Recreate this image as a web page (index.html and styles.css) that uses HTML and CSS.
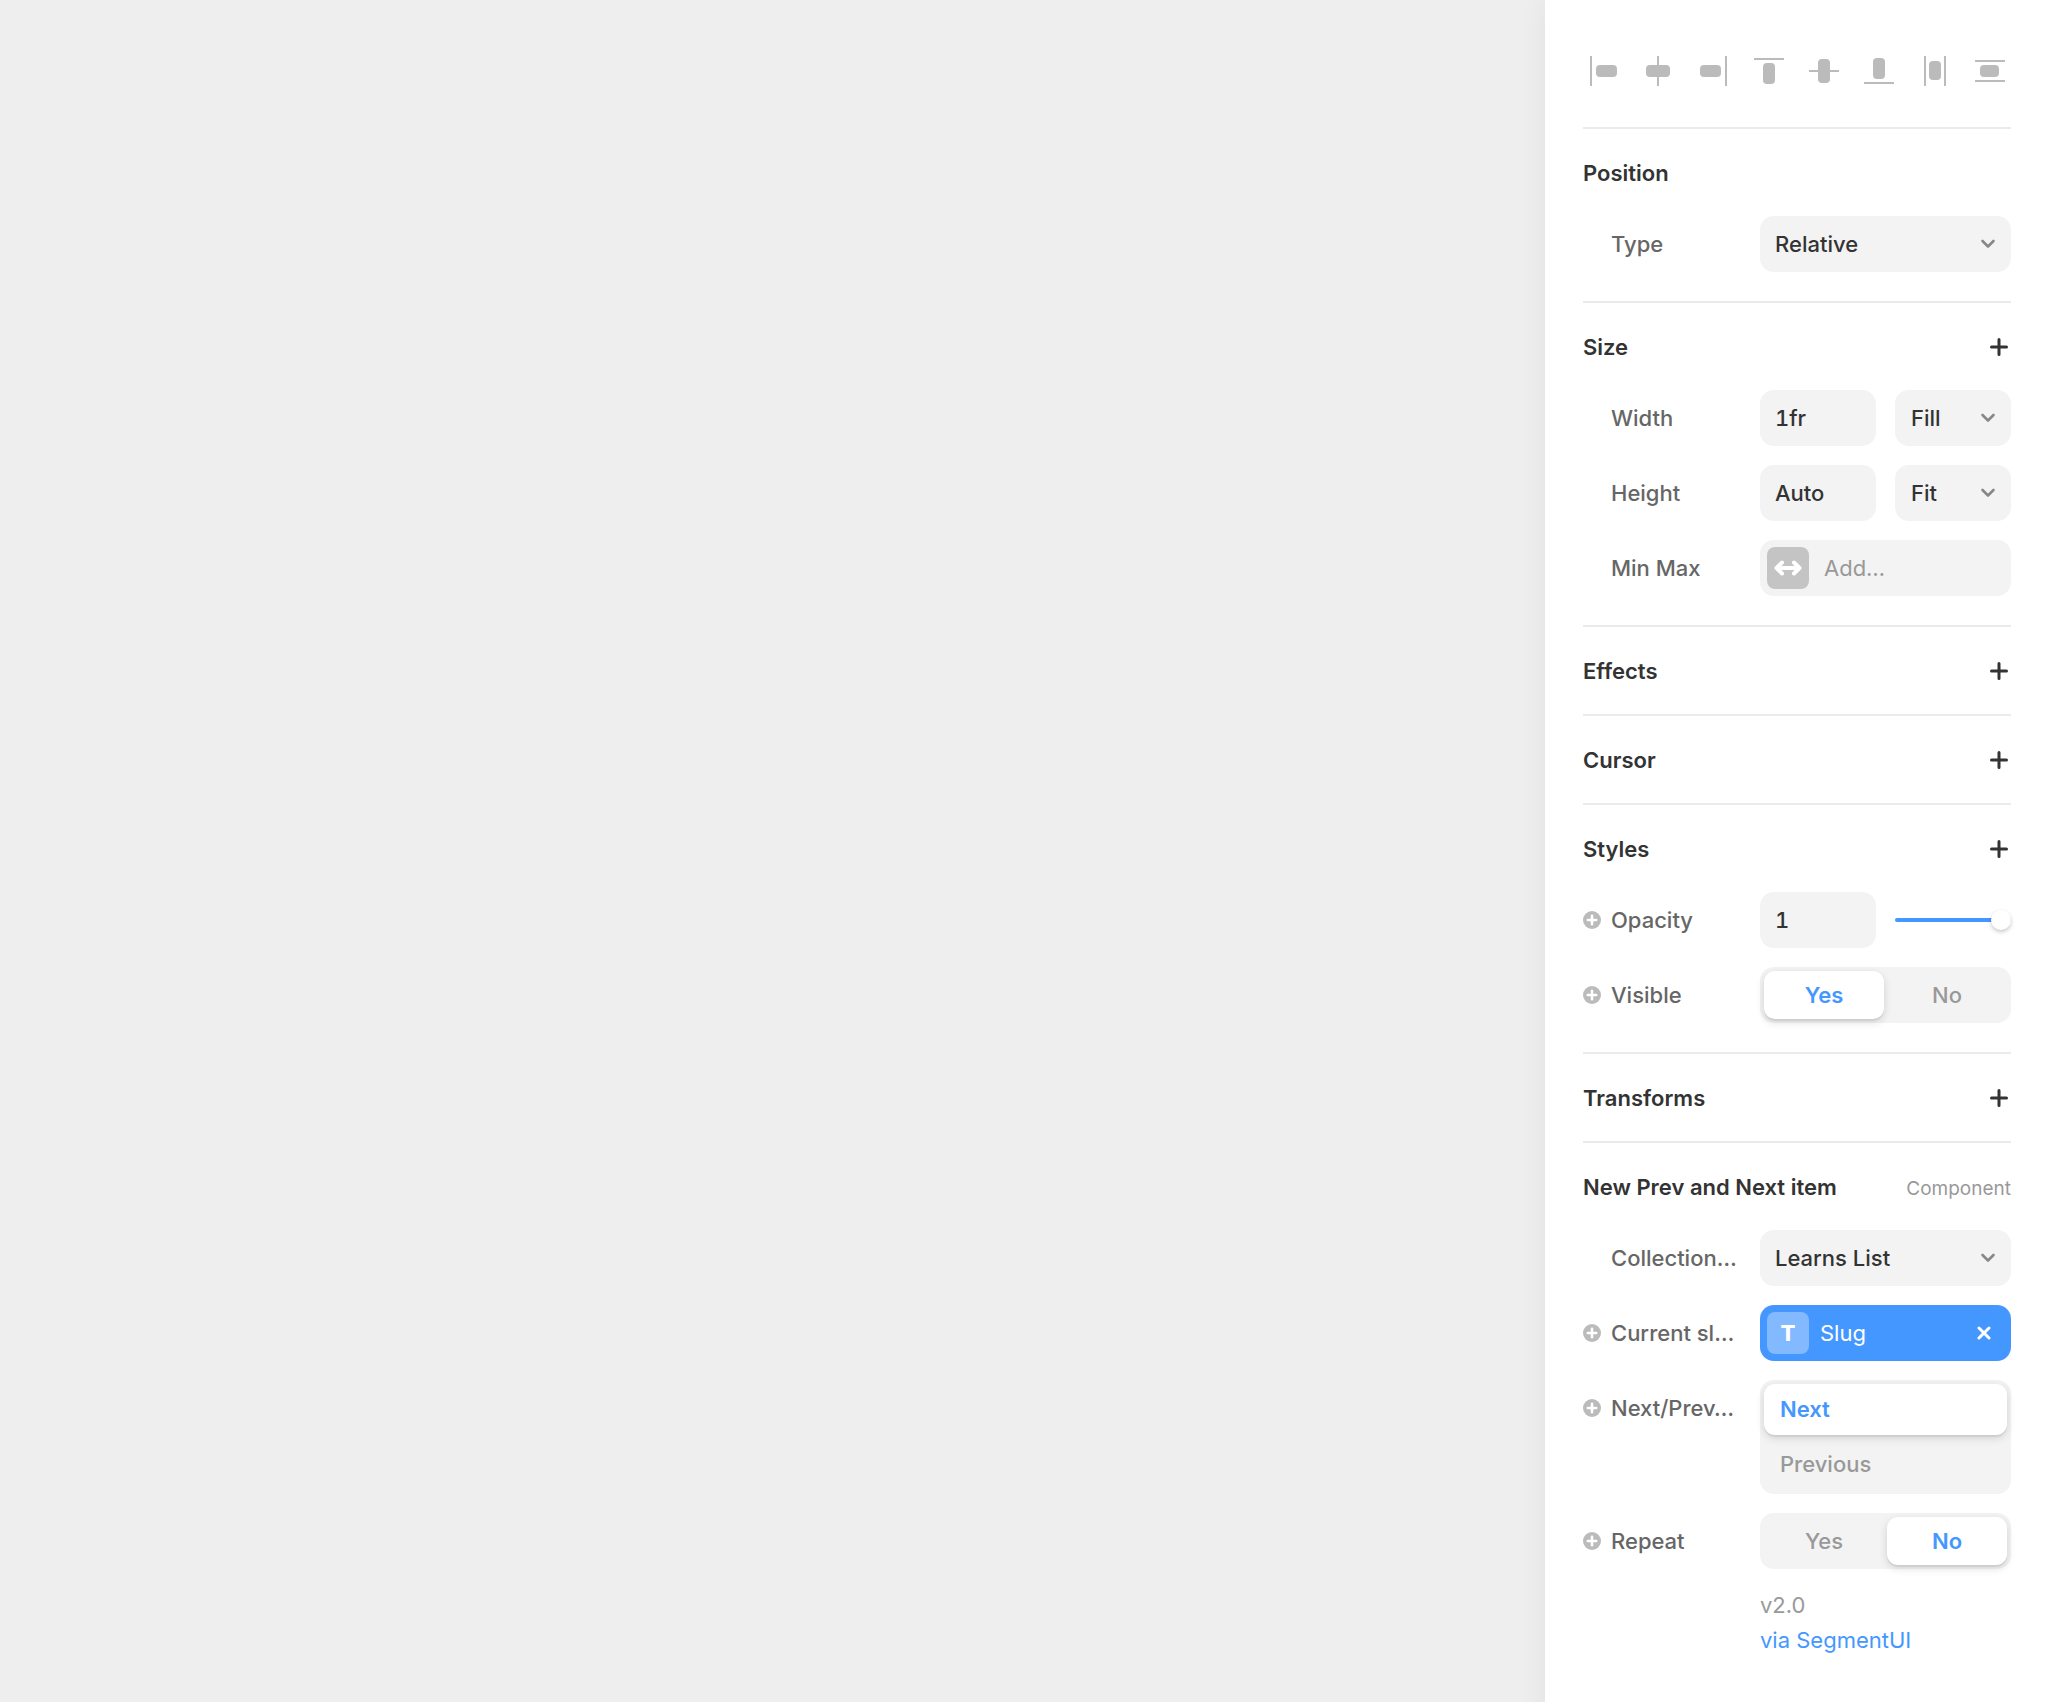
FILE: index.html
```html
<!DOCTYPE html>
<html lang="en">
<head>
  <meta charset="UTF-8">
  <meta name="viewport" content="width=device-width, initial-scale=1.0">
  <title>Properties</title>
  <link rel="stylesheet" href="styles.css">
</head>
<body>
  <!-- Shared icons -->
  <svg class="sprite" aria-hidden="true">
    <symbol id="icon-plus" viewBox="0 0 18 18">
      <path d="M9 1.5V16.5M1.5 9H16.5" fill="none" stroke="currentColor" stroke-width="3" stroke-linecap="round"/>
    </symbol>
    <symbol id="icon-chevron" viewBox="0 0 16 10">
      <path d="M2.5 2L8 7.5L13.5 2" fill="none" stroke="currentColor" stroke-width="2.6" stroke-linecap="round" stroke-linejoin="round"/>
    </symbol>
    <symbol id="icon-add-circle" viewBox="0 0 18 18">
      <circle cx="9" cy="9" r="9" fill="currentColor"/>
      <path d="M9 4.8V13.2M4.8 9H13.2" fill="none" stroke="#fff" stroke-width="2.6" stroke-linecap="round"/>
    </symbol>
  </svg>

  <div class="app">
    <main class="canvas"></main>

    <aside class="panel">
      <!-- Alignment -->
      <div class="toolbar">
        <button class="align-btn" aria-label="Align left">
          <svg viewBox="0 0 30 30"><path d="M3 0V30"/><rect x="8" y="9" width="21" height="12" rx="4"/></svg>
        </button>
        <button class="align-btn" aria-label="Align center">
          <svg viewBox="0 0 30 30"><path d="M15 0V30"/><rect x="3" y="9" width="24" height="12" rx="4"/></svg>
        </button>
        <button class="align-btn" aria-label="Align right">
          <svg viewBox="0 0 30 30"><path d="M27 0V30"/><rect x="1" y="9" width="21" height="12" rx="4"/></svg>
        </button>
        <button class="align-btn" aria-label="Align top">
          <svg viewBox="0 0 30 30"><path d="M0 3H30"/><rect x="9" y="7" width="12" height="21" rx="4"/></svg>
        </button>
        <button class="align-btn" aria-label="Align middle">
          <svg viewBox="0 0 30 30"><path d="M0 15H30"/><rect x="9" y="3" width="12" height="24" rx="4"/></svg>
        </button>
        <button class="align-btn" aria-label="Align bottom">
          <svg viewBox="0 0 30 30"><path d="M0 27H30"/><rect x="9" y="2" width="12" height="21" rx="4"/></svg>
        </button>
        <button class="align-btn" aria-label="Distribute horizontally">
          <svg viewBox="0 0 30 30"><path d="M5 0V30M25 0V30"/><rect x="9" y="5" width="12" height="19" rx="4"/></svg>
        </button>
        <button class="align-btn" aria-label="Distribute vertically">
          <svg viewBox="0 0 30 30"><path d="M0 5H30M0 25H30"/><rect x="5" y="9" width="19" height="12" rx="4"/></svg>
        </button>
      </div>

      <section class="section">
        <div class="section-header">
          <h2>Position</h2>
        </div>
        <div class="rows">
          <div class="row">
            <label class="label" for="type">Type</label>
            <div class="select wide">
              <select id="type"><option>Relative</option></select>
              <svg class="chevron"><use href="#icon-chevron"/></svg>
            </div>
          </div>
        </div>
      </section>

      <section class="section">
        <div class="section-header">
          <h2>Size</h2>
          <button class="add-btn" aria-label="Add size"><svg><use href="#icon-plus"/></svg></button>
        </div>
        <div class="rows">
          <div class="row">
            <label class="label" for="width">Width</label>
            <div class="pair">
              <input class="field" id="width" type="text" value="1fr">
              <div class="select">
                <select aria-label="Width mode"><option>Fill</option></select>
                <svg class="chevron"><use href="#icon-chevron"/></svg>
              </div>
            </div>
          </div>
          <div class="row">
            <label class="label" for="height">Height</label>
            <div class="pair">
              <input class="field" id="height" type="text" value="Auto">
              <div class="select">
                <select aria-label="Height mode"><option>Fit</option></select>
                <svg class="chevron"><use href="#icon-chevron"/></svg>
              </div>
            </div>
          </div>
          <div class="row">
            <span class="label" id="minmax-label">Min Max</span>
            <button class="chip" aria-labelledby="minmax-label">
              <span class="chip-icon">
                <svg width="28" height="18" viewBox="0 0 28 18"><path d="M3 9H25M8 3.5L2.5 9L8 14.5M20 3.5L25.5 9L20 14.5" fill="none" stroke="#fff" stroke-width="4" stroke-linecap="round" stroke-linejoin="round"/></svg>
              </span>
              <span class="chip-text">Add…</span>
            </button>
          </div>
        </div>
      </section>

      <section class="section">
        <div class="section-header">
          <h2>Effects</h2>
          <button class="add-btn" aria-label="Add effect"><svg><use href="#icon-plus"/></svg></button>
        </div>
      </section>

      <section class="section">
        <div class="section-header">
          <h2>Cursor</h2>
          <button class="add-btn" aria-label="Add cursor"><svg><use href="#icon-plus"/></svg></button>
        </div>
      </section>

      <section class="section">
        <div class="section-header">
          <h2>Styles</h2>
          <button class="add-btn" aria-label="Add style"><svg><use href="#icon-plus"/></svg></button>
        </div>
        <div class="rows">
          <div class="row">
            <button class="var-btn" aria-label="Opacity variable"><svg><use href="#icon-add-circle"/></svg></button>
            <label class="label" for="opacity">Opacity</label>
            <div class="pair">
              <input class="field" id="opacity" type="text" value="1">
              <input class="slider" type="range" min="0" max="1" step="0.01" value="1" aria-label="Opacity">
            </div>
          </div>
          <div class="row">
            <button class="var-btn" aria-label="Visible variable"><svg><use href="#icon-add-circle"/></svg></button>
            <span class="label" id="visible-label">Visible</span>
            <div class="segments" role="radiogroup" aria-labelledby="visible-label">
              <label class="segment"><input type="radio" name="visible" checked><span>Yes</span></label>
              <label class="segment"><input type="radio" name="visible"><span>No</span></label>
            </div>
          </div>
        </div>
      </section>

      <section class="section">
        <div class="section-header">
          <h2>Transforms</h2>
          <button class="add-btn" aria-label="Add transform"><svg><use href="#icon-plus"/></svg></button>
        </div>
      </section>

      <section class="section">
        <div class="section-header">
          <h2>New Prev and Next item</h2>
          <span class="tag">Component</span>
        </div>
        <div class="rows">
          <div class="row">
            <label class="label" for="collection">Collection…</label>
            <div class="select wide">
              <select id="collection"><option>Learns List</option></select>
              <svg class="chevron"><use href="#icon-chevron"/></svg>
            </div>
          </div>
          <div class="row">
            <button class="var-btn" aria-label="Current slug variable"><svg><use href="#icon-add-circle"/></svg></button>
            <span class="label">Current sl…</span>
            <div class="chip chip-active">
              <span class="chip-icon">T</span>
              <span class="chip-text">Slug</span>
              <button class="remove-btn" aria-label="Remove slug">
                <svg width="14" height="14" viewBox="0 0 14 14"><path d="M2 2L12 12M12 2L2 12" fill="none" stroke="#fff" stroke-width="3" stroke-linecap="round"/></svg>
              </button>
            </div>
          </div>
          <div class="row">
            <button class="var-btn" aria-label="Next/Prev variable"><svg><use href="#icon-add-circle"/></svg></button>
            <span class="label" id="direction-label">Next/Prev…</span>
            <div class="segments stacked" role="radiogroup" aria-labelledby="direction-label">
              <label class="segment"><input type="radio" name="direction" checked><span>Next</span></label>
              <label class="segment"><input type="radio" name="direction"><span>Previous</span></label>
            </div>
          </div>
          <div class="row">
            <button class="var-btn" aria-label="Repeat variable"><svg><use href="#icon-add-circle"/></svg></button>
            <span class="label" id="repeat-label">Repeat</span>
            <div class="segments" role="radiogroup" aria-labelledby="repeat-label">
              <label class="segment"><input type="radio" name="repeat"><span>Yes</span></label>
              <label class="segment"><input type="radio" name="repeat" checked><span>No</span></label>
            </div>
          </div>
          <div class="row">
            <div class="credits">
              <p>v2.0</p>
              <p><a href="#">via SegmentUI</a></p>
            </div>
          </div>
        </div>
      </section>
    </aside>
  </div>
</body>
</html>
```
FILE: styles.css
```css
* {
  margin: 0;
  padding: 0;
  box-sizing: border-box;
}

:root {
  --blue: #4497ff;
  --field: #f3f3f3;
  --line: #ebebeb;
  --text: #333;
  --label: #666;
  --muted: #999;
  --icon: #bbb;
}

body {
  font-family: Inter, "Liberation Sans", sans-serif;
  font-size: 22px;
  line-height: 28px;
  color: var(--text);
  background: #eee;
}

button,
input,
select {
  font: inherit;
  color: inherit;
  border: none;
  background: none;
  outline: none;
}

button,
select {
  cursor: pointer;
}

svg {
  display: block;
}

.sprite {
  display: none;
}

/* Layout */
.app {
  display: flex;
  min-height: 100vh;
}

.canvas {
  flex: 1;
}

.panel {
  width: 503px;
  padding: 0 37px 37px 38px;
  background: #fff;
  box-shadow: 0 0 28px rgba(0, 0, 0, 0.06);
}

/* Alignment toolbar */
.toolbar {
  display: flex;
  justify-content: space-between;
  padding: 56px 6px 41px 5px;
}

.align-btn svg {
  width: 30px;
  height: 30px;
  fill: var(--icon);
  stroke: none;
}

.align-btn path {
  stroke: var(--icon);
  stroke-width: 2;
}

/* Sections */
.section {
  border-top: 2px solid var(--line);
}

.section-header {
  display: flex;
  align-items: center;
  justify-content: space-between;
  height: 87px;
}

.section-header h2 {
  font-size: 22px;
  font-weight: 600;
}

.add-btn {
  margin-right: 3px;
}

.add-btn svg {
  width: 18px;
  height: 18px;
}

.tag {
  padding-top: 4px;
  font-size: 19px;
  color: var(--muted);
}

/* Property rows */
.rows {
  display: flex;
  flex-direction: column;
  gap: 19px;
  padding-bottom: 29px;
}

.row {
  display: grid;
  grid-template-columns: 28px 1fr 251px;
  align-items: start;
}

.var-btn {
  grid-column: 1;
  height: 56px;
  color: var(--icon);
}

.var-btn svg {
  width: 18px;
  height: 18px;
}

.label {
  grid-column: 2;
  line-height: 56px;
  font-weight: 500;
  color: var(--label);
  white-space: nowrap;
}

.row > :last-child {
  grid-column: 3;
}

.pair {
  display: grid;
  grid-template-columns: 1fr 1fr;
  gap: 19px;
}

.field {
  width: 100%;
  height: 56px;
  padding: 0 15px;
  font-weight: 500;
  font-variant-numeric: tabular-nums;
  border-radius: 14px;
  background: var(--field);
}

/* Drop-downs, the chevron shares the select's grid cell */
.select {
  display: grid;
  align-items: center;
  border-radius: 14px;
  background: var(--field);
}

.select select {
  grid-area: 1 / 1;
  width: 100%;
  height: 56px;
  padding: 0 36px 0 16px;
  font-weight: 500;
  appearance: none;
}

.select.wide select {
  padding-left: 15px;
}

.chevron {
  grid-area: 1 / 1;
  justify-self: end;
  width: 16px;
  height: 10px;
  margin-right: 15px;
  color: #888;
  pointer-events: none;
}

/* Chips */
.chip {
  display: flex;
  align-items: center;
  gap: 15px;
  height: 56px;
  padding: 0 20px 0 7px;
  border-radius: 14px;
  background: var(--field);
  color: var(--muted);
  text-align: left;
}

.chip-icon {
  display: flex;
  align-items: center;
  justify-content: center;
  width: 42px;
  height: 42px;
  border-radius: 8px;
  background: #c4c4c4;
}

.chip-text {
  flex: 1;
}

.chip-active {
  gap: 11px;
  background: var(--blue);
  color: #fff;
}

.chip-active .chip-icon {
  font-weight: 800;
  background: #82b9ff;
}

/* Slider */
.slider {
  width: 100%;
  height: 56px;
  appearance: none;
}

.slider::-webkit-slider-runnable-track {
  height: 4px;
  border-radius: 2px;
  background: var(--blue);
}

.slider::-webkit-slider-thumb {
  appearance: none;
  width: 20px;
  height: 20px;
  margin-top: -8px;
  border-radius: 50%;
  background: #fff;
  box-shadow: 0 2px 4px rgba(0, 0, 0, 0.22);
}

/* Segmented controls */
.segments {
  display: grid;
  grid-template-columns: 1fr 1fr;
  gap: 3px;
  padding: 4px;
  border-radius: 14px;
  background: var(--field);
}

.segment {
  cursor: pointer;
}

.segment input {
  position: absolute;
  opacity: 0;
}

.segment span {
  display: block;
  line-height: 48px;
  font-weight: 500;
  text-align: center;
  border-radius: 11px;
  color: var(--muted);
}

.segment input:checked + span {
  font-weight: 600;
  color: var(--blue);
  background: #fff;
  box-shadow: 0 2px 0 rgba(0, 0, 0, 0.06), 0 3px 8px rgba(0, 0, 0, 0.14);
}

.segments.stacked {
  grid-template-columns: 1fr;
  gap: 4px;
}

.stacked .segment span {
  padding: 0 16px;
  line-height: 51px;
  text-align: left;
}

.credits {
  line-height: 35px;
  color: var(--muted);
}

.credits a {
  color: var(--blue);
  text-decoration: none;
}
```
